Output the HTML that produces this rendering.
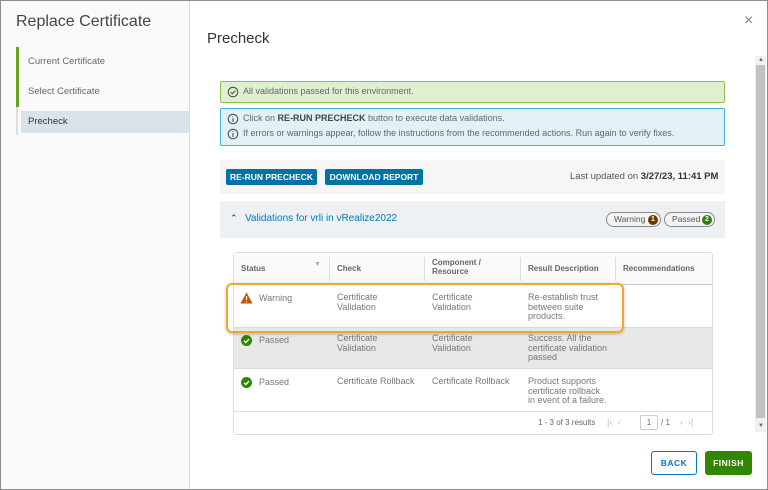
<!DOCTYPE html>
<html><head><style>
*{box-sizing:border-box;margin:0;padding:0}
body{width:768px;height:490px;overflow:hidden;font-family:"Liberation Sans",sans-serif;background:#fff;position:relative;color:#565656}
.a{position:absolute}
.frame{left:0;top:0;width:768px;height:490px;border:1px solid #8c8c8c}
.left{left:1px;top:1px;width:189px;height:488px;background:#fafafa;border-right:1px solid #ddd}
.t{font-size:11px;white-space:nowrap}
.btn{background:#0072a3;color:#fff;font-size:8.5px;font-weight:bold;text-align:center;line-height:16px;border-radius:2px}
.th{font-size:8px;font-weight:bold;color:#666}
.td{font-size:9px;color:#777;line-height:9.5px}
.vl{width:1px;background:#ddd}
</style></head><body>
<div class="a frame"></div>
<div class="a left"></div>
<div class="a" style="left:16px;top:13px;font-size:16px;color:#444">Replace Certificate</div>
<div class="a" style="left:16px;top:107px;width:2px;height:28px;background:#ddd"></div>
<div class="a" style="left:16px;top:47px;width:3px;height:60px;background:#62a420"></div>
<div class="a t" style="left:28px;top:56px;font-size:9.5px;color:#666">Current Certificate</div>
<div class="a t" style="left:28px;top:86px;font-size:9.5px;color:#666">Select Certificate</div>
<div class="a" style="left:21px;top:111px;width:168px;height:22px;background:#dbe3ea"></div>
<div class="a t" style="left:28px;top:116px;font-size:9.5px;color:#333">Precheck</div>
<div class="a" style="left:207px;top:30px;font-size:15px;color:#333">Precheck</div>
<div class="a" style="left:744px;top:12px;font-size:16px;color:#888">×</div>
<div class="a" style="left:755px;top:56px;width:11px;height:376px;background:#f0f0f0"></div>
<div class="a" style="left:756px;top:65px;width:9px;height:353px;background:#c1c1c1"></div>
<div class="a" style="left:758px;top:57px;font-size:6px;color:#666">▲</div>
<div class="a" style="left:758px;top:423px;font-size:6px;color:#666">▼</div>

<div class="a" style="left:220px;top:81px;width:505px;height:22px;background:#dff0d0;border:1px solid #8cc04f;border-radius:2px"></div>
<svg class="a" style="left:227px;top:86px" width="12" height="12"><circle cx="6" cy="6" r="4.8" fill="none" stroke="#444" stroke-width="1"/><path d="M3.7 6.2l1.6 1.6 3-3.2" fill="none" stroke="#444" stroke-width="1"/></svg>
<div class="a t" style="left:243px;top:86px;font-size:9px;color:#666">All validations passed for this environment.</div>
<div class="a" style="left:220px;top:108px;width:505px;height:38px;background:#e1f1f6;border:1px solid #49afd9;border-radius:2px"></div>
<svg class="a" style="left:227px;top:113px" width="12" height="12"><circle cx="6" cy="6" r="4.8" fill="none" stroke="#444"/><path d="M6 5v4M6 3.2v.8" stroke="#444"/></svg>
<svg class="a" style="left:227px;top:128px" width="12" height="12"><circle cx="6" cy="6" r="4.8" fill="none" stroke="#444"/><path d="M6 5v4M6 3.2v.8" stroke="#444"/></svg>
<div class="a t" style="left:243px;top:113px;font-size:9px;color:#666">Click on <b style="color:#444">RE-RUN PRECHECK</b> button to execute data validations.</div>
<div class="a t" style="left:243px;top:128px;font-size:9px;color:#666">If errors or warnings appear, follow the instructions from the recommended actions. Run again to verify fixes.</div>

<div class="a" style="left:220px;top:160px;width:505px;height:34px;background:#f6f6f6"></div>
<div class="a btn" style="left:226px;top:169px;width:91px">RE-RUN PRECHECK</div>
<div class="a btn" style="left:325px;top:169px;width:98px">DOWNLOAD REPORT</div>
<div class="a t" style="left:570px;top:171px;font-size:9.5px;color:#555">Last updated on <b style="color:#333">3/27/23, 11:41 PM</b></div>

<div class="a" style="left:220px;top:201px;width:505px;height:37px;background:#eef1f4"></div>
<div class="a" style="left:230px;top:213px;font-size:9px;color:#333">⌃</div>
<div class="a t" style="left:245px;top:213px;font-size:10px;color:#0079b8">Validations for vrli in vRealize2022</div>
<div class="a" style="left:606px;top:212px;width:55px;height:15px;border:1px solid #888;border-radius:8px;background:#f4f4f4"></div>
<div class="a t" style="left:614px;top:214px;font-size:8.5px;color:#555">Warning</div>
<div class="a" style="left:648px;top:215px;width:10px;height:10px;border-radius:50%;background:#6a3a00;color:#fff;font-size:7px;text-align:center;line-height:10px;font-weight:bold">1</div>
<div class="a" style="left:664px;top:212px;width:51px;height:15px;border:1px solid #888;border-radius:8px;background:#f4f4f4"></div>
<div class="a t" style="left:672px;top:214px;font-size:8.5px;color:#555">Passed</div>
<div class="a" style="left:702px;top:215px;width:10px;height:10px;border-radius:50%;background:#2f7d0a;color:#fff;font-size:7px;text-align:center;line-height:10px;font-weight:bold">2</div>

<div class="a" style="left:233px;top:252px;width:480px;height:183px;border:1px solid #ddd;border-radius:3px;background:#fff"></div>
<div class="a" style="left:234px;top:253px;width:478px;height:32px;background:#fafafa;border-bottom:1px solid #ccc"></div>
<div class="a vl" style="left:329px;top:257px;height:24px"></div>
<div class="a vl" style="left:424px;top:257px;height:24px"></div>
<div class="a vl" style="left:520px;top:257px;height:24px"></div>
<div class="a vl" style="left:615px;top:257px;height:24px"></div>
<div class="a th" style="left:241px;top:264px">Status</div>
<div class="a" style="left:314px;top:261px;font-size:7px;color:#aaa">▼</div>
<div class="a th" style="left:337px;top:264px">Check</div>
<div class="a th" style="left:432px;top:258px;line-height:9px">Component /<br>Resource</div>
<div class="a th" style="left:528px;top:264px">Result Description</div>
<div class="a th" style="left:623px;top:264px">Recommendations</div>
<div class="a" style="left:234px;top:327px;width:478px;height:42px;background:#e8e8e8;border-top:1px solid #ddd;border-bottom:1px solid #ddd"></div>
<div class="a" style="left:234px;top:411px;width:478px;height:1px;background:#ddd"></div>

<svg class="a" style="left:240px;top:292px" width="13" height="12"><path d="M6.5 0.5L12.5 11.5H0.5Z" fill="#c25400"/><path d="M6.5 4v4M6.5 9.2v1" stroke="#fff" stroke-width="1.2"/></svg>
<div class="a td" style="left:259px;top:294px">Warning</div>
<div class="a td" style="left:337px;top:293px">Certificate<br>Validation</div>
<div class="a td" style="left:432px;top:293px">Certificate<br>Validation</div>
<div class="a td" style="left:528px;top:293px">Re-establish trust<br>between suite<br>products.</div>

<svg class="a" style="left:241px;top:335px" width="11" height="11"><circle cx="5.5" cy="5.5" r="5.5" fill="#2f8400"/><path d="M3 5.7l1.8 1.8 3.2-3.4" fill="none" stroke="#fff" stroke-width="1.4"/></svg>
<div class="a td" style="left:259px;top:336px">Passed</div>
<div class="a td" style="left:337px;top:334px">Certificate<br>Validation</div>
<div class="a td" style="left:432px;top:334px">Certificate<br>Validation</div>
<div class="a td" style="left:528px;top:334px">Success. All the<br>certificate validation<br>passed</div>

<svg class="a" style="left:241px;top:377px" width="11" height="11"><circle cx="5.5" cy="5.5" r="5.5" fill="#2f8400"/><path d="M3 5.7l1.8 1.8 3.2-3.4" fill="none" stroke="#fff" stroke-width="1.4"/></svg>
<div class="a td" style="left:259px;top:378px">Passed</div>
<div class="a td" style="left:337px;top:377px">Certificate Rollback</div>
<div class="a td" style="left:432px;top:377px">Certificate Rollback</div>
<div class="a td" style="left:528px;top:377px">Product supports<br>certificate rollback<br>in event of a failure.</div>

<div class="a" style="left:226px;top:283px;width:398px;height:50px;border:2px solid #f0a829;border-radius:6px;box-shadow:0 1px 3px rgba(0,0,0,.25)"></div>

<div class="a t" style="left:538px;top:418px;font-size:8px;color:#666">1 - 3 of 3 results</div>
<div class="a t" style="left:607px;top:417px;font-size:9px;color:#bbb">|‹ &nbsp;‹</div>
<div class="a" style="left:640px;top:415px;width:18px;height:15px;border:1px solid #ccc;border-radius:2px;font-size:8px;text-align:center;line-height:13px;color:#666">1</div>
<div class="a t" style="left:661px;top:418px;font-size:8px;color:#666">/ 1</div>
<div class="a t" style="left:680px;top:417px;font-size:9px;color:#bbb">› &nbsp;›|</div>

<div class="a" style="left:651px;top:451px;width:46px;height:24px;border:1px solid #0079b8;border-radius:3px;color:#0079b8;font-size:8.5px;font-weight:bold;text-align:center;line-height:22px;letter-spacing:.5px">BACK</div>
<div class="a" style="left:705px;top:451px;width:47px;height:24px;background:#318700;border-radius:3px;color:#fff;font-size:8.5px;font-weight:bold;text-align:center;line-height:24px;letter-spacing:.5px">FINISH</div>
</body></html>
